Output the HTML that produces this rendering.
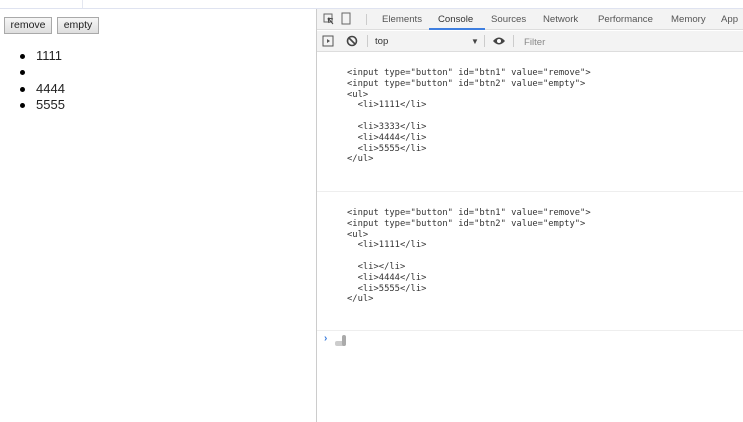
<!DOCTYPE html>
<html><head><style>
*{box-sizing:border-box;margin:0;padding:0}
body{width:743px;height:422px;position:relative;background:#fff;font-family:"Liberation Sans",sans-serif;overflow:hidden}
.a{position:absolute}
.btn{position:absolute;top:17px;height:17px;border:1px solid #a9a9a9;background:linear-gradient(#f6f6f6,#dedede);font-size:10.5px;color:#222;text-align:center;line-height:15px}
.li{position:absolute;left:36px;font-size:13px;color:#222}
.dot{position:absolute;left:20px;width:5px;height:5px;border-radius:50%;background:#000}
.tab{position:absolute;top:14px;font-size:9.6px;color:#555}
pre{position:absolute;left:347px;font-family:"DejaVu Sans Mono","Liberation Mono",monospace;font-size:8.8px;line-height:10.8px;color:#333}
</style></head><body>
<div class="a" style="left:0;top:8px;width:743px;height:1px;background:#dfe3f0"></div>
<div class="a" style="left:82px;top:0;width:1px;height:8px;background:#e4e7f0"></div>
<div class="btn" style="left:4px;width:48px">remove</div>
<div class="btn" style="left:57px;width:42px">empty</div>
<div class="dot" style="top:54px"></div><div class="li" style="top:48px">1111</div>
<div class="dot" style="top:70px"></div>
<div class="dot" style="top:87px"></div><div class="li" style="top:81px">4444</div>
<div class="dot" style="top:103px"></div><div class="li" style="top:97px">5555</div>

<div class="a" style="left:316px;top:9px;width:1px;height:413px;background:#ccc"></div>
<div class="a" style="left:317px;top:9px;width:426px;height:21px;background:#f3f3f3;border-bottom:1px solid #ddd"></div>
<svg class="a" style="left:322px;top:12px" width="32" height="14"><rect x="2" y="2" width="8" height="8" fill="none" stroke="#666"/><path d="M6 6 L11 12 M6 6 L11 7 M6 6 L7 11" stroke="#444" fill="none"/><rect x="20" y="1" width="8" height="11" fill="none" stroke="#666"/></svg>
<div class="a" style="left:366px;top:14px;width:1px;height:11px;background:#ccc"></div>
<div class="tab" style="left:382px">Elements</div>
<div class="tab" style="left:438px;color:#333">Console</div>
<div class="a" style="left:429px;top:28px;width:56px;height:2px;background:#3f7fe0"></div>
<div class="tab" style="left:491px">Sources</div>
<div class="tab" style="left:543px">Network</div>
<div class="tab" style="left:598px">Performance</div>
<div class="tab" style="left:671px">Memory</div>
<div class="tab" style="left:721px">App</div>
<div class="a" style="left:317px;top:31px;width:426px;height:21px;background:#f3f3f3;border-bottom:1px solid #ddd"></div>
<svg class="a" style="left:322px;top:35px" width="40" height="14"><rect x="1" y="1" width="10" height="10" fill="none" stroke="#555"/><path d="M5 4 L8 6 L5 8Z" fill="#555"/><circle cx="30" cy="6" r="4.5" fill="none" stroke="#444" stroke-width="1.6"/><path d="M27 3 L33 9" stroke="#444" stroke-width="1.6"/></svg>
<div class="a" style="left:367px;top:35px;width:1px;height:12px;background:#ccc"></div>
<div class="tab" style="left:375px;top:36px;color:#333">top</div>
<div class="a" style="left:471px;top:37px;font-size:8px;color:#444">▼</div>
<div class="a" style="left:484px;top:35px;width:1px;height:12px;background:#ccc"></div>
<svg class="a" style="left:492px;top:36px" width="14" height="10"><path d="M1 5 Q7 -2 13 5 Q7 12 1 5Z" fill="#444"/><circle cx="7" cy="5" r="2" fill="#fff"/></svg>
<div class="a" style="left:513px;top:35px;width:1px;height:12px;background:#ccc"></div>
<div class="tab" style="left:524px;top:37px;color:#888">Filter</div>

<pre style="top:68px">&lt;input type="button" id="btn1" value="remove"&gt;
&lt;input type="button" id="btn2" value="empty"&gt;
&lt;ul&gt;
  &lt;li&gt;1111&lt;/li&gt;

  &lt;li&gt;3333&lt;/li&gt;
  &lt;li&gt;4444&lt;/li&gt;
  &lt;li&gt;5555&lt;/li&gt;
&lt;/ul&gt;</pre>
<div class="a" style="left:317px;top:191px;width:426px;height:1px;background:#eee"></div>
<pre style="top:208px">&lt;input type="button" id="btn1" value="remove"&gt;
&lt;input type="button" id="btn2" value="empty"&gt;
&lt;ul&gt;
  &lt;li&gt;1111&lt;/li&gt;

  &lt;li&gt;&lt;/li&gt;
  &lt;li&gt;4444&lt;/li&gt;
  &lt;li&gt;5555&lt;/li&gt;
&lt;/ul&gt;</pre>
<div class="a" style="left:317px;top:330px;width:426px;height:1px;background:#eee"></div>
<div class="a" style="left:324px;top:333px;font-size:10px;color:#3b7ddd;font-weight:bold">›</div>
<div class="a" style="left:335px;top:341px;width:11px;height:5px;background:#ccc;border-radius:2px"></div>
<div class="a" style="left:342px;top:335px;width:4px;height:11px;background:#aaa;border-radius:2px"></div>
</body></html>
